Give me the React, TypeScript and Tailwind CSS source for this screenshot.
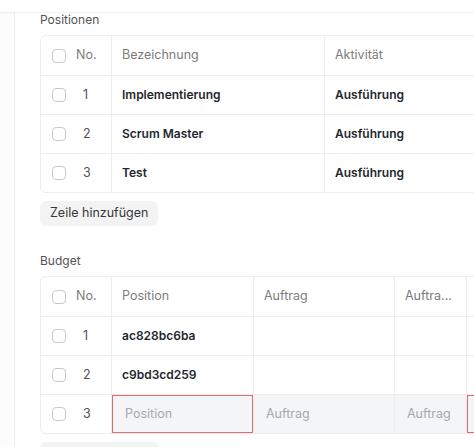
import React from "react";

function Checkbox() {
  return <span className="inline-block w-[14px] h-[14px] rounded-[4px] border border-[#c7c9cc] bg-white shrink-0" />;
}

type Col = { w: string; label: string };

function Table({ cols, rows }: { cols: Col[]; rows: React.ReactNode[][] }) {
  return (
    <div className="w-[520px] border border-[#ebeef0] rounded-md overflow-hidden">
      <div className="flex h-[39px] text-[12.5px] text-[#7c7c7c]">
        <div className="w-[71px] shrink-0 flex items-center pl-[11px] gap-[10px] border-r border-[#ebeef0]">
          <Checkbox />
          <span>No.</span>
        </div>
        {cols.map((c, i) => (
          <div key={i} className={`${c.w} shrink-0 flex items-center px-[10px] border-r border-[#ebeef0]`}>
            {c.label}
          </div>
        ))}
      </div>
      {rows.map((r, ri) => (
        <div key={ri} className="flex h-[39px] text-[12.5px] border-t border-[#ebeef0]">
          <div className="w-[71px] shrink-0 flex items-center pl-[11px] gap-[17px] border-r border-[#ebeef0] text-[#525252]">
            <Checkbox />
            <span>{ri + 1}</span>
          </div>
          {r.map((cell, ci) => (
            <div key={ci} className={`${cols[ci].w} shrink-0 flex items-stretch border-r border-[#ebeef0]`}>
              {cell}
            </div>
          ))}
        </div>
      ))}
    </div>
  );
}

function Bold({ t }: { t: string }) {
  return <span className="flex items-center px-[10px] text-[12px] font-semibold text-[#1f272e]">{t}</span>;
}

function Empty() {
  return <span />;
}

function Input({ t, error }: { t: string; error?: boolean }) {
  return (
    <span
      className={`flex-1 flex items-center px-[12px] bg-[#f4f5f6] text-[#a6a9ad] ${
        error ? "border border-[#e8696a]" : ""
      }`}
    >
      {t}
    </span>
  );
}

export default function App() {
  return (
    <div className="w-[474px] h-[447px] overflow-hidden bg-white font-['Inter',sans-serif]">
      <div className="h-[12px] bg-white shadow-[0_1px_2px_rgba(0,0,0,0.07)] relative z-10" />
      <div className="flex h-[435px]">
        <div className="w-[15px] shrink-0 border-r border-[#ededed] bg-[#fcfcfc]" />
        <div className="flex-1 pl-[25px] overflow-hidden">
          <div className="h-[16px] flex items-center text-[12px] text-[#525252]">Positionen</div>
          <div className="mt-[7px]">
            <Table
              cols={[
                { w: "w-[213px]", label: "Bezeichnung" },
                { w: "w-[236px]", label: "Aktivität" },
              ]}
              rows={[
                [<Bold t="Implementierung" />, <Bold t="Ausführung" />],
                [<Bold t="Scrum Master" />, <Bold t="Ausführung" />],
                [<Bold t="Test" />, <Bold t="Ausführung" />],
              ]}
            />
          </div>
          <button className="mt-[8px] h-[25px] px-[10px] rounded-md bg-[#f3f3f3] text-[12.5px] text-[#383838]">
            Zeile hinzufügen
          </button>
          <div className="mt-[20px] h-[30px] flex items-center text-[12px] text-[#525252]">Budget</div>
          <Table
            cols={[
              { w: "w-[142px]", label: "Position" },
              { w: "w-[141px]", label: "Auftrag" },
              { w: "w-[72px]", label: "Auftra..." },
              { w: "w-[94px]", label: "" },
            ]}
            rows={[
              [<Bold t="ac828bc6ba" />, <Empty />, <Empty />, <Empty />],
              [<Bold t="c9bd3cd259" />, <Empty />, <Empty />, <Empty />],
              [<Input t="Position" error />, <Input t="Auftrag" />, <Input t="Auftrag" />, <Input t="" error />],
            ]}
          />
          <button className="mt-[8px] h-[25px] w-[119px] rounded-md bg-[#f3f3f3]" />
        </div>
      </div>
    </div>
  );
}
